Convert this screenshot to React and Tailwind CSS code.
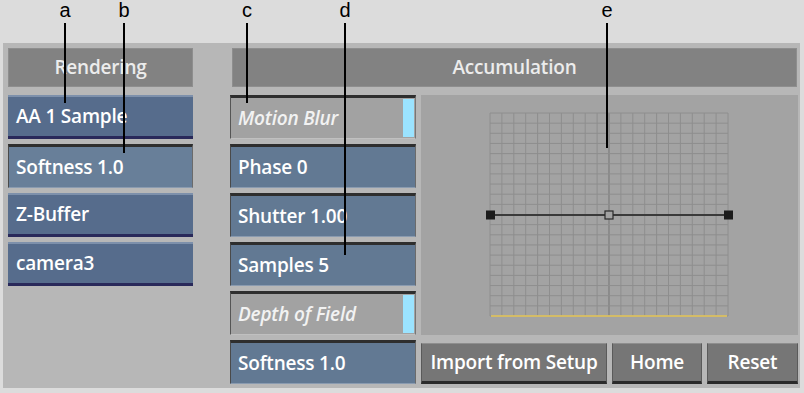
import React from "react";

const font = { fontFamily: "'Open Sans', Lato, sans-serif" };

function BlueBtn({ children }) {
  return (
    <div className="h-[44px] flex items-center pl-[8px] bg-[#566c8c] border-t-2 border-t-[#7d90ab] border-b-[3px] border-b-[#29295a] text-white font-semibold text-[19px] leading-none tracking-[-0.2px]">
      {children}
    </div>
  );
}

function FieldBtn({ children, light }) {
  return (
    <div
      className={
        "h-[44px] flex items-center pl-[7px] border-t-[3px] border-t-[#2e2e2e] border-l border-l-[#4a4a4a] border-r border-r-[#6b6b6b] border-b border-b-[#8a9bb0] text-white font-semibold text-[19px] leading-none tracking-[-0.2px] " +
        (light ? "bg-[#687f99]" : "bg-[#627993]")
      }
    >
      {children}
    </div>
  );
}

function ToggleBtn({ children }) {
  return (
    <div className="h-[44px] flex items-center justify-between pl-[7px] pr-[1px] bg-[#a2a2a2] border-t-[3px] border-t-[#2e2e2e] border-l border-l-[#555] border-r border-r-[#777] border-b border-b-[#c0c0c0] text-[#f2f2f2] italic font-semibold text-[19px] leading-none tracking-[-0.2px]">
      <span>{children}</span>
      <span className="w-[11px] h-[38px] bg-[#9be3ff]" />
    </div>
  );
}

function GrayBtn({ children, w }) {
  return (
    <div
      className={
        "h-[41px] flex items-center justify-center bg-[#767676] border-t border-t-[#8e8e8e] border-l border-l-[#5a5a5a] border-r border-r-[#5a5a5a] border-b-[3px] border-b-[#2b2b2b] text-white font-semibold text-[19px] leading-none tracking-[-0.2px] " +
        w
      }
    >
      {children}
    </div>
  );
}

function Header({ children, className }) {
  return (
    <div
      className={
        "h-[39px] flex items-center justify-center bg-[#828282] border border-[#8e8e8e] text-[#ececec] font-semibold text-[19px] leading-none tracking-[-0.2px] " +
        (className || "")
      }
    >
      {children}
    </div>
  );
}

function Grid() {
  const x0 = 69,
    x1 = 307,
    y0 = 18,
    y1 = 221;
  const cols = 20,
    rows = 20;
  const cw = (x1 - x0) / cols;
  const rh = (y1 - y0) / rows;
  const v = [];
  for (let i = 0; i <= cols; i++) {
    const x = x0 + i * cw;
    v.push(
      <line
        key={"v" + i}
        x1={x}
        x2={x}
        y1={y0}
        y2={y1}
        stroke={i === 10 ? "#7c7c7c" : "#8e8e8e"}
        strokeWidth={i === 10 ? 1.2 : 1}
      />
    );
  }
  const h = [];
  for (let j = 0; j <= rows; j++) {
    const y = y0 + j * rh;
    h.push(
      <line key={"h" + j} x1={x0} x2={x1} y1={y} y2={y} stroke="#8e8e8e" strokeWidth="1" />
    );
  }
  const cy = 120;
  const cx = (x0 + x1) / 2;
  return (
    <svg width="377" height="240" className="block">
      {v}
      {h}
      <line x1={x0} x2={x1} y1={cy} y2={cy} stroke="#3a3a3a" strokeWidth="2" />
      <rect x={x0 - 4} y={cy - 4.5} width="9" height="9" fill="#1c1c1c" />
      <rect x={x1 - 4} y={cy - 4.5} width="9" height="9" fill="#1c1c1c" />
      <rect x={cx - 4} y={cy - 4} width="8" height="8" fill="#a3a3a3" stroke="#2a2a2a" strokeWidth="1.2" />
      <line x1={x0 + 1} x2={x1 - 1} y1={y1} y2={y1} stroke="#e9c957" strokeWidth="1.6" />
    </svg>
  );
}

function Callout({ label, x, bottom }) {
  return (
    <div className="absolute top-0 left-0 w-0 h-0" style={{ left: x }}>
      <div
        className="absolute left-[-10px] w-[20px] text-center top-[0px] text-[20px] leading-[20px] text-black"
        style={{ fontFamily: "'Liberation Sans', Arial, sans-serif" }}
      >
        {label}
      </div>
      <div className="absolute top-[23px] left-[-1px] w-[2px] bg-black" style={{ height: bottom - 23 }} />
    </div>
  );
}

export default function App() {
  return (
    <div className="relative w-[804px] h-[393px] bg-[#dcdcdc] overflow-hidden" style={font}>
      <div className="pt-[43px] pl-[3px]">
        <div className="w-[797px] h-[345px] bg-[#b7b7b7] pt-[5px] pl-[5px] pr-[2px] flex">
          {/* Left column */}
          <div className="w-[185px] flex flex-col">
            <Header>Rendering</Header>
            <div className="mt-[8px] flex flex-col gap-[5px]">
              <BlueBtn>AA 1 Sample</BlueBtn>
              <FieldBtn light>Softness 1.0</FieldBtn>
              <BlueBtn>Z-Buffer</BlueBtn>
              <BlueBtn>camera3</BlueBtn>
            </div>
          </div>
          {/* Right section */}
          <div className="ml-[37px] w-[568px] flex flex-col">
            <Header className="ml-[2px] w-[565px]">Accumulation</Header>
            <div className="mt-[8px] flex gap-[5px]">
              <div className="w-[186px] flex flex-col gap-[5px]">
                <ToggleBtn>Motion Blur</ToggleBtn>
                <FieldBtn>Phase 0</FieldBtn>
                <FieldBtn>Shutter 1.00</FieldBtn>
                <FieldBtn>Samples 5</FieldBtn>
                <ToggleBtn>Depth of Field</ToggleBtn>
                <FieldBtn>Softness 1.0</FieldBtn>
              </div>
              <div className="w-[377px] flex flex-col">
                <div className="h-[240px] bg-[#a3a3a3]">
                  <Grid />
                </div>
                <div className="mt-[8px] flex gap-[5px]">
                  <GrayBtn w="w-[186px]">Import from Setup</GrayBtn>
                  <GrayBtn w="w-[90px]">Home</GrayBtn>
                  <GrayBtn w="w-[91px]">Reset</GrayBtn>
                </div>
              </div>
            </div>
          </div>
        </div>
      </div>
      <Callout label="a" x={65} bottom={103} />
      <Callout label="b" x={124} bottom={153} />
      <Callout label="c" x={247} bottom={103} />
      <Callout label="d" x={345} bottom={255} />
      <Callout label="e" x={607} bottom={148} />
    </div>
  );
}
